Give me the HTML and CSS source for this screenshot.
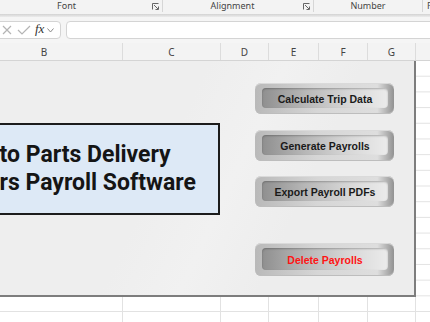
FILE: index.html
```html
<!DOCTYPE html>
<html lang="en">
<head>
    <meta charset="UTF-8">
    <meta name="viewport" content="width=device-width, initial-scale=1.0">
    <title>Drivers Payroll Software</title>
    <link rel="stylesheet" href="styles.css">
</head>
<body>

    <div class="ribbon">
        <div class="group group-font">
            <span class="group-label">Font</span>
            <svg class="launcher" width="7" height="7" viewBox="0 0 7 7"><path d="M0.5 6.5V0.5H6.5M2 2L6 6M3.5 6.5H6.5V3.5" fill="none" stroke="#666" stroke-width="1"/></svg>
        </div>
        <div class="group group-align">
            <span class="group-label">Alignment</span>
            <svg class="launcher" width="7" height="7" viewBox="0 0 7 7"><path d="M0.5 6.5V0.5H6.5M2 2L6 6M3.5 6.5H6.5V3.5" fill="none" stroke="#666" stroke-width="1"/></svg>
        </div>
        <div class="group group-number">
            <span class="group-label">Number</span>
        </div>
        <div class="group group-next">
            <span class="group-label">Fo</span>
        </div>
    </div>
    <div class="ribbon-shadow"></div>

    <div class="formula-bar">
        <div class="fx-box">
            <svg class="fx-icon" width="10" height="10" viewBox="0 0 10 10"><path d="M1 1L9 9M9 1L1 9" stroke="#b4b4b4" stroke-width="1.2"/></svg>
            <svg class="fx-icon" width="14" height="10" viewBox="0 0 14 10"><path d="M1 5L5 9L13 1" fill="none" stroke="#b4b4b4" stroke-width="1.2"/></svg>
            <span class="fx-label">fx</span>
            <svg class="fx-icon" width="7" height="5" viewBox="0 0 7 5"><path d="M0.5 0.5L3.5 4L6.5 0.5" fill="none" stroke="#8a8a8a" stroke-width="1"/></svg>
        </div>
        <div class="formula-input"></div>
    </div>

    <div class="col-headers">
        <div class="col col-b">B</div>
        <div class="col col-c">C</div>
        <div class="col col-d">D</div>
        <div class="col col-e">E</div>
        <div class="col col-f">F</div>
        <div class="col col-g">G</div>
        <div class="col col-h"></div>
    </div>

    <div class="sheet">
        <div class="col col-b"></div>
        <div class="col col-c"></div>
        <div class="col col-d"></div>
        <div class="col col-e"></div>
        <div class="col col-f"></div>
        <div class="col col-g"></div>
        <div class="col col-h"></div>

        <!-- UserForm over the cells -->
        <div class="userform">
            <div class="title-box">
                <p>Auto Parts Delivery</p>
                <p>Drivers Payroll Software</p>
            </div>
            <div class="actions">
                <button class="action"><span>Calculate Trip Data</span></button>
                <button class="action"><span>Generate Payrolls</span></button>
                <button class="action"><span>Export Payroll PDFs</span></button>
                <button class="action action-delete"><span>Delete Payrolls</span></button>
            </div>
        </div>
    </div>

</body>
</html>
```

FILE: styles.css
```css
body {
    margin: 0;
    width: 430px;
    height: 322px;
    overflow: hidden;
    font-family: "Noto Sans", "Open Sans", sans-serif;
    background-color: #f3f3f3;
}

/* Ribbon group labels */
.ribbon {
    display: flex;
    height: 14px;
    background-color: #f3f3f3;
    white-space: nowrap;
}

.group {
    display: flex;
    align-items: center;
    flex-shrink: 0;
    border-right: 1px solid #d6d6d6;
    height: 12px;
    font-size: 9px;
    color: #444;
}

.group-label {
    flex: 1;
    text-align: center;
    line-height: 12px;
}

.launcher {
    margin: 0 3px 0 1px;
}

.group-font {
    width: 180px;
    margin-left: -18px;
}

.group-align {
    width: 150px;
}

.group-number {
    width: 108px;
}

.group-next {
    border-right: none;
    padding-left: 4px;
}

.ribbon-shadow {
    height: 3px;
    background: linear-gradient(#d2d2d2, #ececec);
}

/* Formula bar */
.formula-bar {
    display: flex;
    gap: 5px;
    height: 26px;
    padding-top: 4px;
    box-sizing: border-box;
    background-color: #f5f5f5;
}

.fx-box,
.formula-input {
    height: 18px;
    box-sizing: border-box;
    background-color: #fff;
    border: 1px solid #d4d4d4;
}

.fx-box {
    display: flex;
    align-items: center;
    width: 62px;
    margin-left: -1px;
    padding-left: 2px;
    border-radius: 0 4px 4px 0;
}

.fx-icon {
    margin-right: 5px;
}

.fx-icon:last-child {
    margin-right: 0;
}

.fx-label {
    font-family: "Liberation Serif", serif;
    font-style: italic;
    font-size: 13px;
    color: #333;
    margin: -2px 3px 0 -1px;
}

.formula-input {
    flex: 1;
    margin-right: -4px;
    border-radius: 4px 0 0 4px;
}

/* Column headers and cells */
.col-headers {
    display: flex;
    height: 18px;
    box-sizing: border-box;
    border-bottom: 1px solid #d4d4d4;
    background-color: #f3f3f3;
}

.col {
    flex-shrink: 0;
    box-sizing: border-box;
    border-right: 1px solid #dcdcdc;
}

.col-headers .col {
    font-size: 10px;
    color: #444;
    text-align: center;
    line-height: 18px;
}

.col-b { width: 157px; margin-left: -34px; }
.col-c { width: 98px; }
.col-d { width: 48px; }
.col-e { width: 50px; }
.col-f { width: 49px; }
.col-g { width: 48px; }
.col-h { flex: 1; border-right: none; }

.sheet {
    position: relative;
    display: flex;
    height: 261px;
    background-color: #fff;
    background-image: linear-gradient(to bottom, transparent 14.7px, #e2e2e2 14.7px);
    background-size: 100% 15.7px;
}

.sheet .col {
    border-right-color: #e2e2e2;
}

/* UserForm */
.userform {
    position: absolute;
    top: 0;
    left: 0;
    width: 416px;
    height: 236px;
    box-sizing: border-box;
    display: flex;
    align-items: flex-start;
    background: linear-gradient(115deg, #eeeeee 40%, #f1f1f1 55%, #ededed 70%);
    border-right: 2px solid #7d7d7d;
    border-bottom: 2px solid #7d7d7d;
}

.title-box {
    width: 298px;
    height: 92px;
    margin: 62px 0 0 -78px;
    padding-top: 16px;
    box-sizing: border-box;
    flex-shrink: 0;
    background-color: #dde9f6;
    border: 2px solid #1c1c1c;
    text-align: center;
    font-family: Roboto, "Noto Sans", sans-serif;
    font-weight: bold;
    font-size: 23px;
    line-height: 28px;
    color: #151515;
}

.title-box p {
    margin: 0;
    white-space: nowrap;
}

.actions {
    display: flex;
    flex-direction: column;
    margin-left: 35px;
    padding-top: 22px;
}

.action {
    display: flex;
    width: 139px;
    height: 31px;
    padding: 5px 6px 6px 7px;
    margin-bottom: 16px;
    box-sizing: border-box;
    border: none;
    border-radius: 6px;
    background: linear-gradient(to right, #b9b9b9, #d6d6d6 45%, #dedede 88%, #929292);
    box-shadow: inset 0 1px 0 #dadada, inset 0 -1px 0 #bdbdbd;
    cursor: pointer;
}

.action:nth-child(2) {
    margin-bottom: 15px;
}

.action:nth-child(3) {
    margin-bottom: 36px;
}

.action span {
    flex: 1;
    display: flex;
    align-items: center;
    justify-content: center;
    border-radius: 4px;
    background: linear-gradient(to right, #8f8f8f, #b8b8b8 35%, #d8d8d8 70%, #ebebeb);
    box-shadow: inset 0 1px 2px rgba(0, 0, 0, 0.25);
    font-family: "Liberation Sans", Arial, sans-serif;
    font-weight: bold;
    font-size: 10.5px;
    color: #1a1a1a;
    padding-top: 2px;
}

.action-delete {
    height: 33px;
}

.action-delete span {
    color: #ff1414;
}
```
